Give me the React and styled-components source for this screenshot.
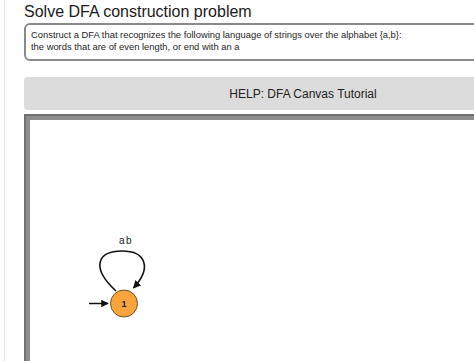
import React from "react";
import styled, { createGlobalStyle } from "styled-components";

const Global = createGlobalStyle`
  html, body { margin: 0; padding: 0; background: #fff; overflow: hidden; }
  body { font-family: "Liberation Sans", Arial, sans-serif; color: #111; }
`;

const Page = styled.div`
  position: relative;
  width: 474px;
  height: 361px;
  overflow: hidden;
  padding-left: 24px;
  box-sizing: border-box;
  &::before {
    content: "";
    position: absolute;
    left: 4px;
    top: 0;
    bottom: 0;
    width: 1px;
    background: #e6e6e6;
  }
`;

const Column = styled.div`
  width: 558px;
  display: flex;
  flex-direction: column;
`;

const Title = styled.h1`
  margin: 2px 0 0 0;
  font-size: 16px;
  font-weight: normal;
  line-height: 19px;
  color: #1a1a1a;
`;

const Problem = styled.div`
  margin-top: 2px;
  border: 2px solid #8a8a8a;
  border-radius: 6px;
  padding: 4px 0 6px 5px;
  font-size: 9.4px;
  line-height: 12px;
  color: #1e1e1e;
`;

const HelpBar = styled.div`
  margin-top: 16px;
  height: 33px;
  background: #dcdcdc;
  border-radius: 4px;
  display: flex;
  align-items: center;
  justify-content: center;
  font-size: 12px;
  color: #222;
`;

const Canvas = styled.div`
  margin-top: 4px;
  height: 300px;
  border-top: 2px solid #707070;
  border-left: 2px solid #707070;
  box-shadow: inset 4px 4px 0 #8e8e8e;
  position: relative;
  background: #fff;
`;

const Drawing = styled.svg`
  position: absolute;
  left: 4px;
  top: 6px;
`;

export default function App() {
  return (
    <>
      <Global />
      <Page>
        <Column>
          <Title>Solve DFA construction problem</Title>
          <Problem>
            Construct a DFA that recognizes the following language of strings over the alphabet {"{a,b}"}:
            <br />
            the words that are of even length, or end with an a
          </Problem>
          <HelpBar>HELP: DFA Canvas Tutorial</HelpBar>
          <Canvas>
            <Drawing width="500" height="260" viewBox="0 0 500 260">
              <defs>
                <marker id="ah" viewBox="0 0 10 10" refX="9" refY="5" markerWidth="5" markerHeight="5" orient="auto">
                  <path d="M0 0 L10 5 L0 10 Z" fill="#111" />
                </marker>
              </defs>
              <line x1="59" y1="181.5" x2="78" y2="181.5" stroke="#111" strokeWidth="1.5" markerEnd="url(#ah)" />
              <path
                d="M86 169 C 60 145, 68 129, 92 129 C 116 129, 122 146, 103.5 166"
                fill="none"
                stroke="#111"
                strokeWidth="1.6"
                markerEnd="url(#ah)"
              />
              <text x="96" y="122" textAnchor="middle" fontSize="10" letterSpacing="1.5" fontFamily="Liberation Sans, Arial, sans-serif" fill="#222">ab</text>
              <circle cx="94" cy="181.5" r="13.5" fill="#f8a33c" stroke="#6b5428" strokeWidth="1" />
              <text x="94" y="185" textAnchor="middle" fontSize="9" fontWeight="bold" fontFamily="Liberation Sans, Arial, sans-serif" fill="#222">1</text>
            </Drawing>
          </Canvas>
        </Column>
      </Page>
    </>
  );
}
